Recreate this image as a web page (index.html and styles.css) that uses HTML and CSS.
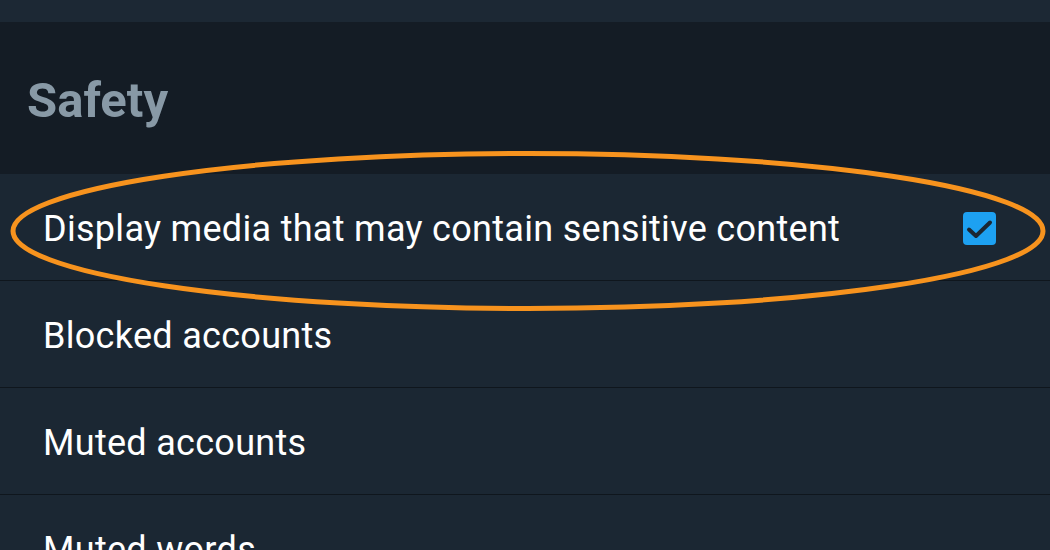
FILE: index.html
```html
<!DOCTYPE html>
<html>
<head>
<meta charset="utf-8">
<link rel="stylesheet" href="styles.css">
</head>
<body>
<div class="page">
  <div class="topbar"></div>
  <div class="section-head"><h2 class="section-title">Safety</h2></div>
  <ul class="list">
    <li class="row">
      <span class="label">Display media that may contain sensitive content</span>
      <span class="checkbox">
        <svg viewBox="0 0 33 33" width="33" height="33"><path d="M6 17.5 L13 24 L27 10.5" fill="none" stroke="#1b2733" stroke-width="4" stroke-linecap="round" stroke-linejoin="round"/></svg>
      </span>
    </li>
    <li class="row"><span class="label">Blocked accounts</span></li>
    <li class="row"><span class="label">Muted accounts</span></li>
    <li class="row"><span class="label">Muted words</span></li>
  </ul>
  <svg class="highlight" width="1050" height="550" viewBox="0 0 1050 550"><ellipse cx="528" cy="231" rx="515" ry="77.5" fill="none" stroke="#f7931e" stroke-width="5"/></svg>
</div>
</body>
</html>
```
FILE: styles.css
```css
html, body {
  margin: 0;
  padding: 0;
  background: #1b2733;
  overflow: hidden;
}
.page {
  position: relative;
  width: 1050px;
  height: 550px;
  overflow: hidden;
  font-family: Roboto, "Liberation Sans", sans-serif;
}
.topbar {
  height: 22px;
  background: #1c2834;
}
.section-head {
  height: 152px;
  background: #141c25;
  display: flex;
  align-items: center;
  padding-left: 27px;
  box-sizing: border-box;
}
.section-title {
  margin: 0;
  font-size: 49px;
  font-weight: 700;
  color: #8899a6;
  line-height: 1;
  padding-top: 4px;
}
.list {
  list-style: none;
  margin: 0;
  padding: 0;
}
.row {
  height: 106px;
  border-bottom: 1px solid #0f161d;
  background: #1b2733;
  display: flex;
  align-items: center;
  justify-content: space-between;
  padding: 0 54px 0 43px;
  box-sizing: content-box;
}
.label {
  color: #ffffff;
  font-size: 36px;
  letter-spacing: 0.3px;
  line-height: 1;
  padding-top: 4px;
}
.checkbox {
  width: 33px;
  height: 33px;
  border-radius: 4px;
  background: #1da1f2;
  display: flex;
  margin-top: 2px;
}
.highlight {
  position: absolute;
  left: 0;
  top: 0;
  pointer-events: none;
}
```
